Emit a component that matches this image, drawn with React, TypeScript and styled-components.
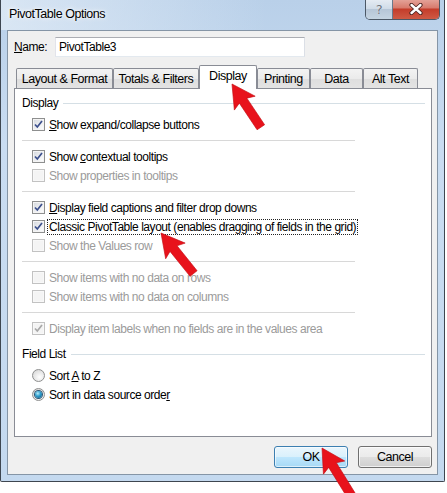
import React from 'react';
import styled, { createGlobalStyle } from 'styled-components';

const GlobalStyle = createGlobalStyle`
  html, body {
    margin: 0;
    padding: 0;
    background: #ffffff;
  }
  body {
    font-family: "Liberation Sans", Arial, sans-serif;
    font-size: 12px;
    letter-spacing: -0.45px;
    color: #000;
  }
`;

const Page = styled.div`
  position: relative;
  width: 447px;
  height: 493px;
  overflow: hidden;
`;

const Window = styled.div`
  width: 445px;
  height: 482px;
  box-sizing: border-box;
  border: 1px solid #3e4650;
  border-top: none;
  border-radius: 0 0 2px 2px;
  background: linear-gradient(180deg, #b9d0e9 0%, #c9dcf1 30%, #c4d9ef 100%);
  display: flex;
  flex-direction: column;
  padding: 0 6px 6px;
`;

const TitleBar = styled.div`
  height: 30px;
  display: flex;
  align-items: flex-start;
  justify-content: space-between;
  background: linear-gradient(90deg, rgba(230, 239, 248, 0.7) 0%, rgba(230, 239, 248, 0) 60%);
  margin: 0 -6px;
  padding-left: 8px;
`;

const Title = styled.div`
  margin-top: 7px;
  font-size: 12.5px;
  text-shadow: 0 0 6px #ffffff, 0 0 3px #ffffff;
`;

const Caption = styled.div`
  display: flex;
  margin-right: 4px;
  margin-top: -1px;
  border: 1px solid #4c5866;
  border-top: none;
  border-radius: 0 0 5px 5px;
  overflow: hidden;
  height: 20px;
`;

const HelpButton = styled.div`
  width: 26px;
  display: flex;
  align-items: center;
  justify-content: center;
  background: linear-gradient(180deg, #e7edf4 0%, #cfdbe7 50%, #b6c6d7 51%, #c5d4e2 100%);
  border-right: 1px solid #6a7a8c;
  font-family: "DejaVu Sans", sans-serif;
  font-size: 13px;
  color: #6a737d;
  text-shadow: 0 0 1px #ffffff;
`;

const CloseButton = styled.div`
  width: 46px;
  display: flex;
  align-items: center;
  justify-content: center;
  background: linear-gradient(180deg, #e5a69c 0%, #d77a6c 45%, #c43c2a 50%, #cf5a44 100%);
`;

const Client = styled.div`
  flex: 1;
  border: 1px solid #8595a6;
  background: #f0f0f0;
  display: flex;
  flex-direction: column;
  padding: 6px 5px 0 6px;
`;

const NameRow = styled.div`
  display: flex;
  align-items: center;
  gap: 5px;
  height: 20px;
`;

const NameLabel = styled.span`
  width: 36px;
`;

const NameInput = styled.div`
  width: 250px;
  height: 20px;
  box-sizing: border-box;
  border: 1px solid #abadb3;
  border-left-color: #e2e3ea;
  border-right-color: #dbdfe6;
  border-bottom-color: #e3e9ef;
  background: #fff;
  padding: 2px 3px;
  line-height: 14px;
`;

const Tabs = styled.div`
  display: flex;
  align-items: flex-end;
  height: 24px;
  margin-top: 7px;
  padding-left: 2px;
`;

const Tab = styled.div<{ $w: number; $active?: boolean }>`
  position: relative;
  z-index: ${(p) => (p.$active ? 2 : 0)};
  box-sizing: border-box;
  width: ${(p) => p.$w}px;
  height: ${(p) => (p.$active ? 24 : 20)}px;
  margin-bottom: ${(p) => (p.$active ? -1 : 0)}px;
  border: 1px solid #898c95;
  border-bottom: none;
  border-radius: 2px 2px 0 0;
  background: ${(p) =>
    p.$active ? '#ffffff' : 'linear-gradient(180deg, #f3f3f3 0%, #ebebeb 50%, #dedede 51%, #e3e3e3 100%)'};
  display: flex;
  align-items: center;
  justify-content: center;
  padding-bottom: ${(p) => (p.$active ? 4 : 0)}px;
  font-size: 12.5px;
`;

const Panel = styled.div`
  position: relative;
  z-index: 1;
  height: 349px;
  box-sizing: border-box;
  border: 1px solid #898c95;
  background: #ffffff;
  padding: 7px 6px 0 7px;
`;

const GroupHeader = styled.div`
  display: flex;
  align-items: center;
  gap: 5px;
  height: 14px;

  &::after {
    content: '';
    flex: 1;
    height: 1px;
    background: #d5dfe5;
  }
`;

const Group = styled.div<{ $top?: number }>`
  margin-top: ${(p) => p.$top ?? 5}px;
  display: flex;
  flex-direction: column;
`;

const Separator = styled.div`
  width: 333px;
  height: 1px;
  background: #d8d8d8;
  margin: 6px 0;
`;

const Row = styled.div<{ $disabled?: boolean }>`
  display: flex;
  align-items: center;
  height: 19px;
  padding-left: 10px;
  gap: 3px;
  color: ${(p) => (p.$disabled ? '#9b9b9b' : '#000')};
`;

const RowText = styled.span<{ $focused?: boolean }>`
  outline: ${(p) => (p.$focused ? '1px dotted #222' : 'none')};
  outline-offset: 0;
  padding: 0 1px;
  line-height: 14px;
`;

const Box = styled.span<{ $disabled?: boolean }>`
  width: 13px;
  height: 13px;
  box-sizing: border-box;
  border: 1px solid ${(p) => (p.$disabled ? '#c2c2c2' : '#8e8f8f')};
  background: ${(p) => (p.$disabled ? '#f4f4f4' : 'linear-gradient(135deg, #d3d7dd 0%, #f0f1f3 60%, #ffffff 100%)')};
  box-shadow: inset 0 0 0 1px ${(p) => (p.$disabled ? '#f8f8f8' : '#f4f4f4')};
  display: inline-flex;
  align-items: center;
  justify-content: center;
  flex: none;
`;

const Radio = styled.span<{ $on?: boolean }>`
  width: 13px;
  height: 13px;
  box-sizing: border-box;
  border-radius: 50%;
  border: 1px solid #8e8f8f;
  background: radial-gradient(circle at 60% 65%, #ffffff 0%, #e6e6e6 55%, #cfcfcf 100%);
  display: inline-flex;
  align-items: center;
  justify-content: center;
  flex: none;

  &::after {
    content: '';
    display: ${(p) => (p.$on ? 'block' : 'none')};
    width: 7px;
    height: 7px;
    border-radius: 50%;
    background: radial-gradient(circle at 40% 35%, #b9ecf9 0%, #2c9ccc 45%, #0d4f78 100%);
    box-shadow: 0 0 0 1px #2b5474;
  }
`;

const ButtonRow = styled.div`
  display: flex;
  justify-content: flex-end;
  gap: 10px;
  margin-top: 9px;
  padding-right: 0;
`;

const Button = styled.div<{ $default?: boolean }>`
  width: 74px;
  height: 22px;
  box-sizing: border-box;
  border: 1px solid ${(p) => (p.$default ? '#3c7fb1' : '#707070')};
  border-radius: 3px;
  background: ${(p) =>
    p.$default
      ? 'linear-gradient(180deg, #eaf6fd 0%, #d9f0fc 50%, #bee6fd 51%, #a7d9f5 100%)'
      : 'linear-gradient(180deg, #f2f2f2 0%, #ebebeb 50%, #dddddd 51%, #cfcfcf 100%)'};
  box-shadow: inset 0 0 0 1px ${(p) => (p.$default ? 'rgba(255,255,255,0.6)' : 'rgba(255,255,255,0.7)')};
  display: flex;
  align-items: center;
  justify-content: center;
  font-size: 12.5px;
`;

const ArrowLayer = styled.svg`
  position: absolute;
  left: 0;
  top: 0;
  z-index: 10;
  pointer-events: none;
`;

const Tick = ({ disabled }: { disabled?: boolean }) => (
  <svg width="11" height="11" viewBox="0 0 11 11">
    <path
      d="M2 5.5 L4.3 8 L9 2"
      fill="none"
      stroke={disabled ? '#a8a8a8' : '#3c4f8c'}
      strokeWidth="1.7"
    />
  </svg>
);

type Item = { text: React.ReactNode; checked?: boolean; disabled?: boolean; focused?: boolean };

const CheckRow = ({ text, checked, disabled, focused }: Item) => (
  <Row $disabled={disabled}>
    <Box $disabled={disabled}>{checked && <Tick disabled={disabled} />}</Box>
    <RowText $focused={focused}>{text}</RowText>
  </Row>
);

const groups: Item[][] = [
  [{ text: <><u>S</u>how expand/collapse buttons</>, checked: true }],
  [
    { text: <>Show <u>c</u>ontextual tooltips</>, checked: true },
    { text: 'Show properties in tooltips', disabled: true },
  ],
  [
    { text: <><u>D</u>isplay field captions and filter drop downs</>, checked: true },
    { text: 'Classic PivotTable layout (enables dragging of fields in the grid)', checked: true, focused: true },
    { text: 'Show the Values row', disabled: true },
  ],
  [
    { text: 'Show items with no data on rows', disabled: true },
    { text: 'Show items with no data on columns', disabled: true },
  ],
  [{ text: 'Display item labels when no fields are in the values area', checked: true, disabled: true }],
];

const tabs = [
  { label: 'Layout & Format', w: 97 },
  { label: 'Totals & Filters', w: 86 },
  { label: 'Display', w: 58, active: true },
  { label: 'Printing', w: 53 },
  { label: 'Data', w: 53 },
  { label: 'Alt Text', w: 55 },
];

const arrows = [
  { x: 232, y: 84, angle: -33.7, len: 52 },
  { x: 161, y: 233, angle: -38.8, len: 52 },
  { x: 322, y: 448, angle: -31.7, len: 62 },
];

const App = () => {
  return (
    <Page>
      <GlobalStyle />
      <Window>
        <TitleBar>
          <Title>PivotTable Options</Title>
          <Caption>
            <HelpButton>?</HelpButton>
            <CloseButton>
              <svg width="14" height="12" viewBox="0 0 14 12">
                <path d="M2.5 2 L11.5 10 M11.5 2 L2.5 10" stroke="#4a2420" strokeWidth="4.2" strokeLinecap="round" />
                <path d="M2.5 2 L11.5 10 M11.5 2 L2.5 10" stroke="#ffffff" strokeWidth="2.4" strokeLinecap="round" />
              </svg>
            </CloseButton>
          </Caption>
        </TitleBar>
        <Client>
          <NameRow>
            <NameLabel>
              <u>N</u>ame:
            </NameLabel>
            <NameInput>PivotTable3</NameInput>
          </NameRow>
          <Tabs>
            {tabs.map((t) => (
              <Tab key={t.label} $w={t.w} $active={t.active}>
                {t.label}
              </Tab>
            ))}
          </Tabs>
          <Panel>
            <GroupHeader>Display</GroupHeader>
            <Group>
              {groups.map((g, i) => (
                <React.Fragment key={i}>
                  {i > 0 && <Separator />}
                  {g.map((item, j) => (
                    <CheckRow key={j} {...item} />
                  ))}
                </React.Fragment>
              ))}
            </Group>
            <Group $top={9}>
              <GroupHeader>Field List</GroupHeader>
            </Group>
            <Group>
              <Row>
                <Radio />
                <RowText>
                  Sort <u>A</u> to Z
                </RowText>
              </Row>
              <Row>
                <Radio $on />
                <RowText>
                  Sort in data source orde<u>r</u>
                </RowText>
              </Row>
            </Group>
          </Panel>
          <ButtonRow>
            <Button $default>OK</Button>
            <Button>Cancel</Button>
          </ButtonRow>
        </Client>
      </Window>
      <ArrowLayer width="447" height="493" viewBox="0 0 447 493">
        {arrows.map((a, i) => (
          <polygon
            key={i}
            transform={`translate(${a.x} ${a.y}) rotate(${a.angle})`}
            points={`0,0 12.5,23 4.5,20 4.5,${a.len} -4.5,${a.len} -4.5,20 -12.5,23`}
            fill="#e8121b"
            stroke="#c40d14"
            strokeWidth="0.6"
          />
        ))}
      </ArrowLayer>
    </Page>
  );
};

export default App;
